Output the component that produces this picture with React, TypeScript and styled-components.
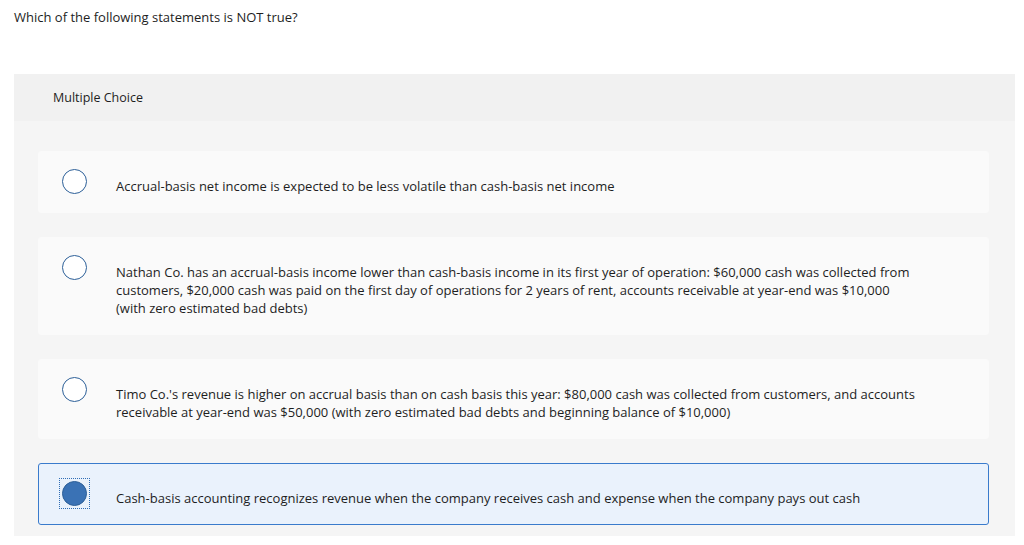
import React from 'react';
import styled, { createGlobalStyle } from 'styled-components';

const GlobalStyle = createGlobalStyle`
  html, body {
    margin: 0;
    padding: 0;
    background: #ffffff;
  }
  body {
    font-family: "Open Sans", Lato, Arial, sans-serif;
    color: #1e1e1e;
  }
`;

const Page = styled.div`
  padding: 9px 9px 0 14px;
`;

const Question = styled.p`
  margin: 0;
  font-size: 13px;
  line-height: 16px;
`;

const Panel = styled.section`
  margin-top: 49px;
  background: #f5f5f5;
`;

const PanelHeader = styled.div`
  background: #f1f1f1;
  height: 47px;
  display: flex;
  align-items: center;
  padding-left: 39px;
  font-size: 12.5px;
`;

const Options = styled.div`
  display: flex;
  flex-direction: column;
  gap: 24px;
  padding: 30px 26px 11px 24px;
`;

const Option = styled.label<{ $selected?: boolean }>`
  display: flex;
  align-items: flex-start;
  box-sizing: border-box;
  padding: 14px 22px 17px 20px;
  border-radius: 3px;
  background: ${(p) => (p.$selected ? '#eaf2fc' : '#fafafa')};
  border: 1px solid ${(p) => (p.$selected ? '#3a7bcc' : '#fafafa')};
  cursor: pointer;
`;

const RadioFrame = styled.span<{ $focused?: boolean }>`
  flex: none;
  padding: 2px;
  margin-bottom: -10px;
  border: 1px dotted ${(p) => (p.$focused ? '#2f6db5' : 'transparent')};
  display: flex;
`;

const Radio = styled.span<{ $checked?: boolean }>`
  width: 25px;
  height: 25px;
  box-sizing: border-box;
  border-radius: 50%;
  border: 1px solid #2c5f98;
  background: ${(p) => (p.$checked ? '#3a72b5' : '#ffffff')};
`;

const OptionText = styled.span`
  margin-left: 26px;
  padding-top: 11px;
  font-size: 13px;
  line-height: 18px;
  max-width: 802px;
`;

const choices = [
  'Accrual-basis net income is expected to be less volatile than cash-basis net income',
  'Nathan Co. has an accrual-basis income lower than cash-basis income in its first year of operation: $60,000 cash was collected from customers, $20,000 cash was paid on the first day of operations for 2 years of rent, accounts receivable at year-end was $10,000 (with zero estimated bad debts)',
  "Timo Co.'s revenue is higher on accrual basis than on cash basis this year: $80,000 cash was collected from customers, and accounts receivable at year-end was $50,000 (with zero estimated bad debts and beginning balance of $10,000)",
  'Cash-basis accounting recognizes revenue when the company receives cash and expense when the company pays out cash',
];

const App: React.FC = () => {
  const selected = 3;
  return (
    <>
      <GlobalStyle />
      <Page>
        <Question>Which of the following statements is NOT true?</Question>
        <Panel>
          <PanelHeader>Multiple Choice</PanelHeader>
          <Options>
            {choices.map((c, i) => (
              <Option key={i} $selected={i === selected}>
                <RadioFrame $focused={i === selected}>
                  <Radio $checked={i === selected} />
                </RadioFrame>
                <OptionText>{c}</OptionText>
              </Option>
            ))}
          </Options>
        </Panel>
      </Page>
    </>
  );
};

export default App;
